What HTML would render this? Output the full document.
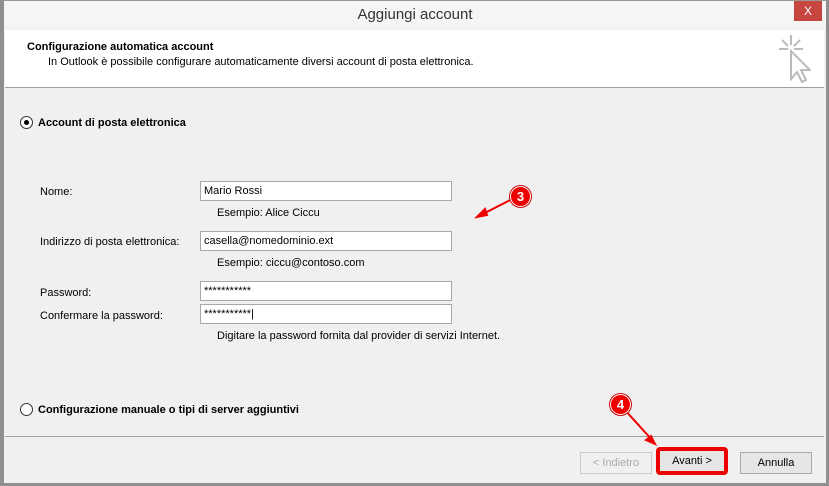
<!DOCTYPE html>
<html><head><style>
*{margin:0;padding:0;box-sizing:border-box}
body{width:829px;height:486px;overflow:hidden;font-family:"Liberation Sans",sans-serif;font-size:11px;color:#000;background:#8f8f8f;position:relative}
.win{position:absolute;left:4px;top:0;width:822px;height:483px;background:#f0f0f0;border-top:1px solid #9a9a9a}
.title{position:absolute;left:0;top:0;width:100%;height:28px;background:#f5f5f5;text-align:center;font-size:15px;line-height:28px;color:#333}
.close{position:absolute;right:4px;top:0;width:28px;height:20px;background:#c7453f;color:#fff;font-size:12px;line-height:20px;text-align:center}
.head{position:absolute;left:1px;top:29px;width:819px;height:58px;background:#fff;border-bottom:1px solid #a0a0a0}
.abs{position:absolute;white-space:nowrap}
.b{font-weight:bold}
.inp{position:absolute;left:196px;width:252px;height:20px;background:#fff;border:1px solid #a8a8a8;padding-left:3px;line-height:19px}
.radio{position:absolute;width:13px;height:13px;border:1px solid #333;border-radius:50%;background:#fff}
.btn{position:absolute;top:451px;height:22px;border:1px solid #aaa;background:#e6e6e6;text-align:center;line-height:20px;font-size:11px}
.badge{position:absolute;width:21px;height:21px;border-radius:50%;background:#e00;color:#fff;font-weight:bold;font-size:13px;text-align:center;line-height:20px;border:1px solid #fff;box-shadow:0 0 0 1px #c00}
</style></head><body>
<div class="win">
<div class="title">Aggiungi account</div>
<div class="close">X</div>
<div class="head">
<div class="abs b" style="left:22px;top:11px">Configurazione automatica account</div>
<div class="abs" style="left:43px;top:26px">In Outlook è possibile configurare automaticamente diversi account di posta elettronica.</div>
<svg class="abs" style="left:766px;top:3px" width="40" height="52"><g stroke="#bbb" stroke-width="2" fill="none"><path d="M20 2v10M11 7l6 6M8 16h9M29 7l-6 6M32 16h-9"/><path d="M20 18v28l6-7 5 10 4-2-5-10h9z" fill="#fff"/></g></svg>
</div>
<div class="radio" style="left:16px;top:115px"><div style="position:absolute;left:3px;top:3px;width:5px;height:5px;border-radius:50%;background:#000"></div></div>
<div class="abs b" style="left:34px;top:116px">Account di posta elettronica</div>
<div class="abs" style="left:36px;top:185px">Nome:</div>
<div class="inp" style="top:180px">Mario Rossi</div>
<div class="abs" style="left:213px;top:206px">Esempio: Alice Ciccu</div>
<div class="abs" style="left:36px;top:235px">Indirizzo di posta elettronica:</div>
<div class="inp" style="top:230px">casella@nomedominio.ext</div>
<div class="abs" style="left:213px;top:256px">Esempio: ciccu@contoso.com</div>
<div class="abs" style="left:36px;top:286px">Password:</div>
<div class="inp" style="top:280px">***********</div>
<div class="abs" style="left:36px;top:309px">Confermare la password:</div>
<div class="inp" style="top:303px">***********|</div>
<div class="abs" style="left:213px;top:329px">Digitare la password fornita dal provider di servizi Internet.</div>
<div class="radio" style="left:16px;top:402px"></div>
<div class="abs b" style="left:34px;top:403px">Configurazione manuale o tipi di server aggiuntivi</div>
<div style="position:absolute;left:1px;top:435px;width:819px;border-top:1px solid #a0a0a0"></div>
<div class="btn" style="left:576px;width:72px;color:#aaa;border-color:#ccc;background:#f0f0f0">&lt; Indietro</div>
<div class="btn" style="left:652px;width:72px;top:446px;height:28px;border:4px solid #e00;border-radius:4px;line-height:20px;background:#e6e6e6">Avanti &gt;</div>
<div class="btn" style="left:736px;width:72px">Annulla</div>
<svg class="abs" style="left:0;top:0" width="823" height="483"><g stroke="#e00" stroke-width="2" fill="#e00"><path d="M512 196L477 214" fill="none"/><path d="M473 216l8-8 2 6z"/><path d="M620 408L649 440" fill="none"/><path d="M651 443l-9-4 5-4z"/></g></svg>
<div class="badge" style="left:506px;top:185px">3</div>
<div class="badge" style="left:606px;top:393px">4</div>
</div>
</body></html>
